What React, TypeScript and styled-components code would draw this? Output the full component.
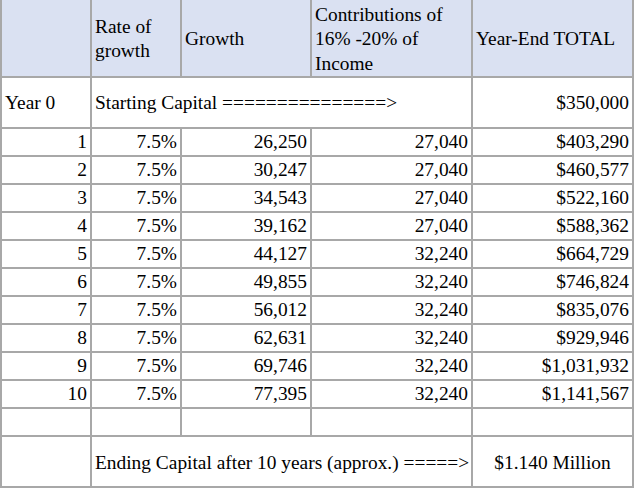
import React, { FC } from 'react';
import styled, { createGlobalStyle } from 'styled-components';

const GlobalStyle = createGlobalStyle`
  html, body {
    margin: 0;
    padding: 0;
    background: #ffffff;
  }
`;

const Sheet = styled.table`
  border-collapse: collapse;
  table-layout: fixed;
  width: 632px;
  font-family: 'Liberation Serif', 'Times New Roman', serif;
  font-size: 19.4px;
  color: #000;
`;

const HeadRow = styled.tr`
  height: 76px;
  background: #dae1f2;
`;

const Row = styled.tr<{ $tall?: boolean }>`
  height: ${(p) => (p.$tall ? '51px' : '28px')};
`;

const HeadCell = styled.th`
  border: 2px solid #a8a8a8;
  border-top: none;
  padding: 3px 2px 0 3px;
  font-weight: normal;
  text-align: left;
  vertical-align: middle;
  line-height: 24.3px;
`;

const Cell = styled.td<{ $align?: 'left' | 'right' | 'center'; $drop?: number }>`
  border: 2px solid #a8a8a8;
  padding: ${(p) => p.$drop || 0}px 3px 0 3px;
  text-align: ${(p) => p.$align || 'right'};
  vertical-align: middle;
  line-height: 22px;
  white-space: nowrap;
  overflow: hidden;
`;

type YearRow = { year: number; growth: string; contrib: string; total: string };

const rows: YearRow[] = [
  { year: 1, growth: '26,250', contrib: '27,040', total: '$403,290' },
  { year: 2, growth: '30,247', contrib: '27,040', total: '$460,577' },
  { year: 3, growth: '34,543', contrib: '27,040', total: '$522,160' },
  { year: 4, growth: '39,162', contrib: '27,040', total: '$588,362' },
  { year: 5, growth: '44,127', contrib: '32,240', total: '$664,729' },
  { year: 6, growth: '49,855', contrib: '32,240', total: '$746,824' },
  { year: 7, growth: '56,012', contrib: '32,240', total: '$835,076' },
  { year: 8, growth: '62,631', contrib: '32,240', total: '$929,946' },
  { year: 9, growth: '69,746', contrib: '32,240', total: '$1,031,932' },
  { year: 10, growth: '77,395', contrib: '32,240', total: '$1,141,567' },
];

const App: FC = () => {
  return (
    <>
      <GlobalStyle />
      <Sheet>
        <colgroup>
          <col style={{ width: 90 }} />
          <col style={{ width: 90 }} />
          <col style={{ width: 130 }} />
          <col style={{ width: 161 }} />
          <col style={{ width: 161 }} />
        </colgroup>
        <thead>
          <HeadRow>
            <HeadCell />
            <HeadCell>Rate of<br />growth</HeadCell>
            <HeadCell>Growth</HeadCell>
            <HeadCell>Contributions of<br />16% -20% of<br />Income</HeadCell>
            <HeadCell>Year-End TOTAL</HeadCell>
          </HeadRow>
        </thead>
        <tbody>
          <Row $tall>
            <Cell $align="left" $drop={2}>Year 0</Cell>
            <Cell $align="left" $drop={2} colSpan={3}>Starting Capital ===============&gt;</Cell>
            <Cell $drop={2}>$350,000</Cell>
          </Row>
          {rows.map((r) => (
            <Row key={r.year}>
              <Cell>{r.year}</Cell>
              <Cell>7.5%</Cell>
              <Cell>{r.growth}</Cell>
              <Cell>{r.contrib}</Cell>
              <Cell>{r.total}</Cell>
            </Row>
          ))}
          <Row>
            <Cell />
            <Cell />
            <Cell />
            <Cell />
            <Cell />
          </Row>
          <Row $tall>
            <Cell />
            <Cell $align="left" $drop={3} colSpan={3}>Ending Capital after 10 years (approx.) =====&gt;</Cell>
            <Cell $align="center" $drop={3}>$1.140 Million</Cell>
          </Row>
        </tbody>
      </Sheet>
    </>
  );
};

export default App;
